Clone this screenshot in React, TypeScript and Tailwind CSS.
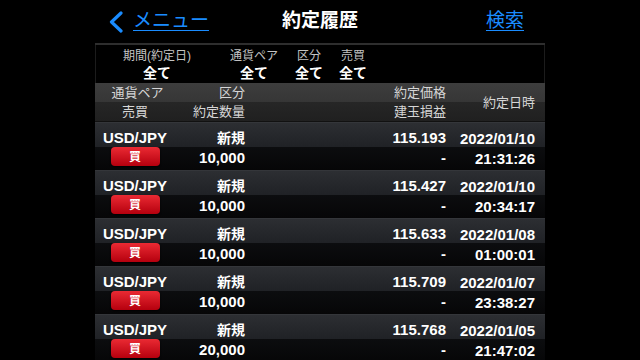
const font = { fontFamily: '"Liberation Sans", "Noto Sans CJK JP", sans-serif' }

type Trade = {
  pair: string
  kind: string
  side: string
  qty: string
  price: string
  pl: string
  date: string
  time: string
}

const trades: Trade[] = [
  { pair: "USD/JPY", kind: "新規", side: "買", qty: "10,000", price: "115.193", pl: "-", date: "2022/01/10", time: "21:31:26" },
  { pair: "USD/JPY", kind: "新規", side: "買", qty: "10,000", price: "115.427", pl: "-", date: "2022/01/10", time: "20:34:17" },
  { pair: "USD/JPY", kind: "新規", side: "買", qty: "10,000", price: "115.633", pl: "-", date: "2022/01/08", time: "01:00:01" },
  { pair: "USD/JPY", kind: "新規", side: "買", qty: "10,000", price: "115.709", pl: "-", date: "2022/01/07", time: "23:38:27" },
  { pair: "USD/JPY", kind: "新規", side: "買", qty: "20,000", price: "115.768", pl: "-", date: "2022/01/05", time: "21:47:02" },
]

const filters = [
  { label: "期間(約定日)", value: "全て", w: "w-[122px]" },
  { label: "通貨ペア", value: "全て", w: "w-[72px]" },
  { label: "区分", value: "全て", w: "w-[38px]" },
  { label: "売買", value: "全て", w: "w-[50px]" },
]

const TopBar = () => (
  <header className="grid h-[43px] grid-cols-[1fr_auto_1fr] items-center">
    <a className="flex items-center gap-[9px] pl-[108px] text-[19px] text-[#1a8cff]">
      <svg width="16" height="22" viewBox="0 0 16 22" fill="none">
        <path d="M13 2 L3.5 11 L13 20" stroke="#1a8cff" strokeWidth="3.2" strokeLinecap="round" strokeLinejoin="round" />
      </svg>
      <span className="underline underline-offset-[3px]">メニュー</span>
    </a>
    <h1 className="text-[19px] font-bold text-white">約定履歴</h1>
    <div className="flex justify-end pr-[116px]">
      <a className="text-[19px] text-[#1a8cff] underline underline-offset-[3px]">検索</a>
    </div>
  </header>
)

const Row = ({ t }: { t: Trade }) => (
  <div className="grid h-[48px] grid-cols-[80px_70px_201px_89px] border-t border-[#34363a] bg-[linear-gradient(to_bottom,#2c2e32_0%,#202226_50%,#0c0d0f_50%,#060607_100%)] pt-[5px] text-[15px] font-bold text-white">
    <div className="flex flex-col items-center">
      <div className="h-[20px] leading-[20px]">{t.pair}</div>
      <div className="flex h-[20px] items-center">
        <span className="mb-[3px] flex h-[19px] w-[49px] items-center justify-center rounded-[4px] bg-[linear-gradient(to_bottom,#ea2a33,#b5000e)] text-[12px] text-white shadow-[0_1px_2px_rgba(0,0,0,0.8)]">
          {t.side}
        </span>
      </div>
    </div>
    <div className="text-right">
      <div className="h-[20px] text-[14px] leading-[20px]">{t.kind}</div>
      <div className="h-[20px] leading-[20px]">{t.qty}</div>
    </div>
    <div className="text-right">
      <div className="h-[20px] leading-[20px]">{t.price}</div>
      <div className="h-[20px] leading-[20px]">{t.pl}</div>
    </div>
    <div className="text-right">
      <div className="h-[20px] leading-[22px]">{t.date}</div>
      <div className="h-[20px] leading-[22px]">{t.time}</div>
    </div>
  </div>
)

export default function App() {
  return (
    <div className="h-[360px] w-[640px] overflow-hidden bg-black" style={font}>
      <TopBar />
      <div className="mx-[95px] w-[450px] border-t-2 border-[#2e2e2e]">
        <div className="flex h-[38px] border-x border-[#1c1c1c] pt-[3px]">
          {filters.map((f) => (
            <div key={f.label} className={`${f.w} flex flex-col items-center`}>
              <span className="text-[12px] leading-[16px] text-[#c4c4c4]">{f.label}</span>
              <span className="text-[14px] font-bold leading-[18px] text-white">{f.value}</span>
            </div>
          ))}
        </div>
        <div className="grid h-[39px] grid-cols-[80px_70px_201px_89px] border-b border-[#111] bg-[linear-gradient(to_bottom,#3d3d3d_0%,#363636_50%,#262626_50%,#202020_100%)] text-[13px] text-[#d6d6d6]">
          <div className="flex flex-col items-center">
            <div className="h-[19px] pl-[5px] leading-[20px]">通貨ペア</div>
            <div className="h-[20px] leading-[20px]">売買</div>
          </div>
          <div className="text-right">
            <div className="h-[19px] leading-[20px]">区分</div>
            <div className="h-[20px] leading-[20px]">約定数量</div>
          </div>
          <div className="text-right">
            <div className="h-[19px] leading-[20px]">約定価格</div>
            <div className="h-[20px] leading-[20px]">建玉損益</div>
          </div>
          <div className="flex items-center justify-end">約定日時</div>
        </div>
        {trades.map((t, i) => (
          <Row key={i} t={t} />
        ))}
      </div>
    </div>
  )
}
